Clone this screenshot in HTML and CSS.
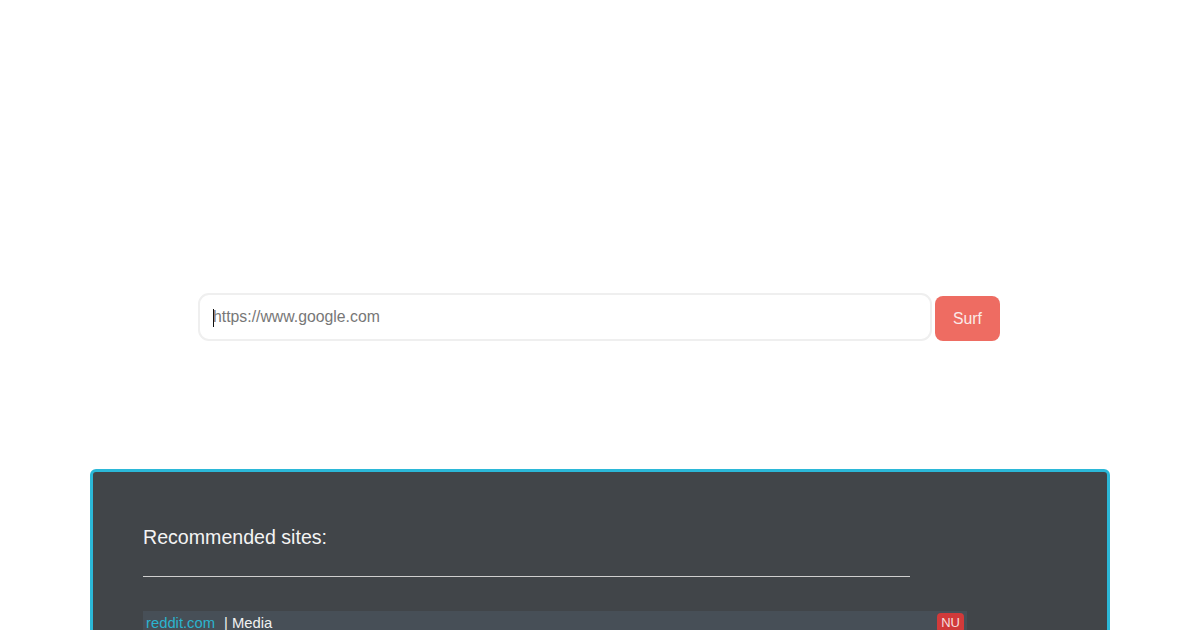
FILE: index.html
```html
<!DOCTYPE html>
<html>
<head>
<meta charset="utf-8">
<link rel="stylesheet" href="styles.css">
</head>
<body>
<main class="page">
  <form class="search">
    <div class="search-field">
      <span class="caret"></span>
      <input class="search-input" type="text" placeholder="https://www.google.com">
    </div>
    <button class="surf-btn" type="button">Surf</button>
  </form>
  <section class="card">
    <h2 class="card-title">Recommended sites:</h2>
    <hr class="divider">
    <ul class="site-list">
      <li class="site-row">
        <span class="site-info"><a class="site-link">reddit.com</a><span class="site-cat">| Media</span></span>
        <span class="badge">NU</span>
      </li>
    </ul>
  </section>
</main>
</body>
</html>
```

FILE: styles.css
```css
html, body {
  margin: 0;
  padding: 0;
  background: #ffffff;
  font-family: "Liberation Sans", Arial, sans-serif;
}
.page {
  width: 1200px;
  overflow: hidden;
}
.search {
  display: flex;
  justify-content: center;
  align-items: flex-start;
  gap: 3px;
  padding-top: 293px;
  margin-left: -2px;
}
.search-field {
  position: relative;
  width: 730px;
  height: 44px;
  border: 2px solid #efefef;
  border-radius: 11px;
  background: #fff;
  display: flex;
  align-items: center;
}
.caret {
  position: absolute;
  left: 13px;
  top: 14px;
  width: 1px;
  height: 18px;
  background: #111;
}
.search-input {
  border: none;
  outline: none;
  background: transparent;
  font-family: "Liberation Sans", Arial, sans-serif;
  font-size: 15.8px;
  color: #333;
  padding: 0 0 0 13px;
  width: 100%;
  height: 100%;
  box-sizing: border-box;
}
.search-input::placeholder {
  color: #777;
}
.surf-btn {
  margin-top: 3px;
  width: 65px;
  height: 45px;
  border: none;
  border-radius: 8px;
  background: #ee6c62;
  color: #fbeae8;
  font-family: "Liberation Sans", Arial, sans-serif;
  font-size: 15.8px;
  padding: 0;
}
.card {
  margin: 128px 90px 0;
  height: 300px;
  border: 3px solid #2bb8d8;
  border-radius: 6px;
  background: #414549;
  padding: 50px 50px 0;
  box-sizing: border-box;
}
.card-title {
  margin: 0;
  font-weight: normal;
  font-size: 19.6px;
  line-height: 30px;
  color: #f4f4f4;
}
.divider {
  margin: 24px 0 0;
  width: 767px;
  border: none;
  height: 1px;
  background: #cfcfcf;
}
.site-list {
  list-style: none;
  margin: 34px 0 0;
  padding: 0;
  width: 824px;
}
.site-row {
  display: flex;
  justify-content: space-between;
  align-items: flex-start;
  background: #474f57;
  padding: 2px 3px 2px 3px;
  height: 30px;
}
.site-info {
  font-size: 14.8px;
  line-height: 20px;
}
.site-link {
  color: #2bb4cf;
  margin-right: 9px;
}
.site-cat {
  color: #f2f2f2;
}
.badge {
  background: #d13a3a;
  color: #f6dede;
  font-size: 13px;
  line-height: 20px;
  padding: 0 4px;
  border-radius: 4px;
}
```
